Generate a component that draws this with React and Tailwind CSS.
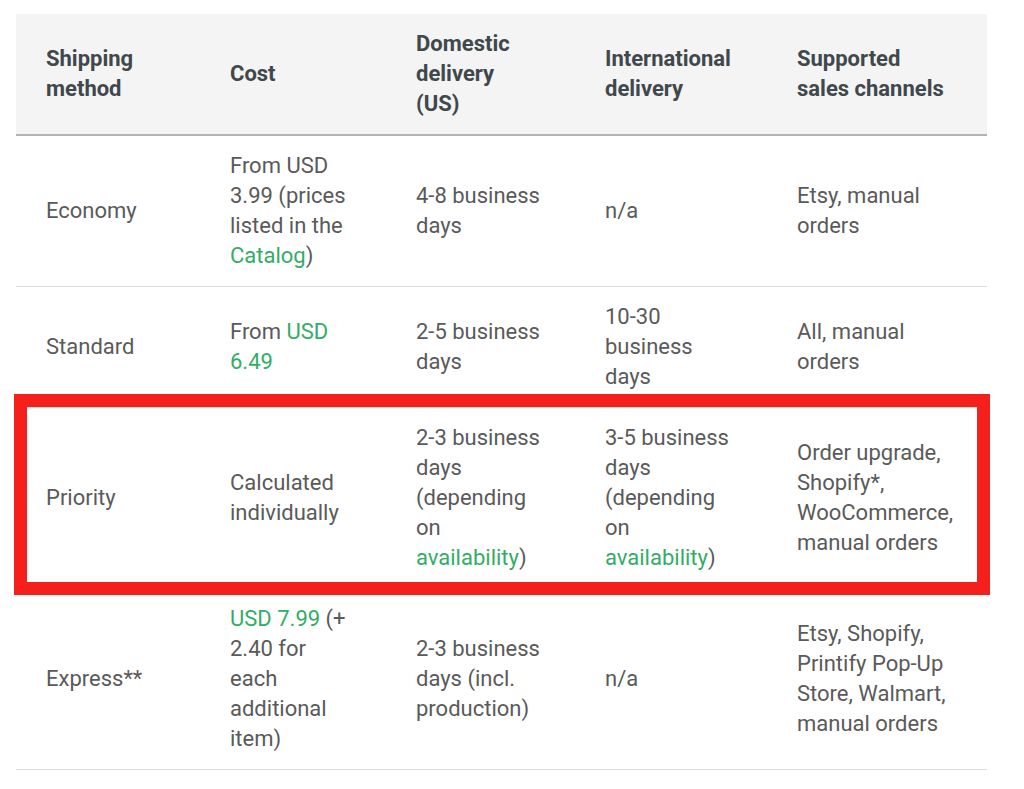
import React from 'react';

const Link = ({ children }) => <span className="text-[#33ad66]">{children}</span>;

const headers = [
  'Shipping method',
  'Cost',
  <>Domestic delivery<br />(US)</>,
  'International delivery',
  'Supported sales channels',
];

const rows = [
  {
    key: 'economy',
    cells: [
      'Economy',
      <>From USD 3.99 (prices listed in the <Link>Catalog</Link>)</>,
      '4-8 business days',
      'n/a',
      'Etsy, manual orders',
    ],
  },
  {
    key: 'standard',
    cells: [
      'Standard',
      <>From <Link>USD 6.49</Link></>,
      '2-5 business days',
      '10-30 business days',
      'All, manual orders',
    ],
  },
  {
    key: 'priority',
    cells: [
      'Priority',
      'Calculated individually',
      <>2-3 business days (depending on <Link>availability</Link>)</>,
      <>3-5 business days (depending on <Link>availability</Link>)</>,
      'Order upgrade, Shopify*, WooCommerce, manual orders',
    ],
  },
  {
    key: 'express',
    cells: [
      'Express**',
      <><Link>USD 7.99</Link> (+ 2.40 for each additional item)</>,
      '2-3 business days (incl. production)',
      'n/a',
      'Etsy, Shopify, Printify Pop-Up Store, Walmart, manual orders',
    ],
  },
];

// per-column right padding so lines wrap like the reference
const padR = ['pr-[20px]', 'pr-[34px]', 'pr-[33px]', 'pr-[30px]', 'pr-[30px]'];

export default function App() {
  return (
    <div className="min-h-[789px] w-[1024px] bg-white pt-[14px] pl-[16px] font-['Roboto',sans-serif]">
      <div className="relative w-[971px]">
        <table className="w-[971px] table-fixed border-collapse text-[22px] leading-[30px]">
          <colgroup>
            <col className="w-[184px]" />
            <col className="w-[186px]" />
            <col className="w-[189px]" />
            <col className="w-[192px]" />
            <col className="w-[220px]" />
          </colgroup>
          <thead>
            <tr className="bg-[#f4f4f4] border-b-2 border-[#b3b3b3]">
              {headers.map((h, i) => (
                <th
                  key={i}
                  className={`py-[15px] pl-[30px] ${padR[i]} text-left align-middle font-bold text-[#40484c]`}
                >
                  {h}
                </th>
              ))}
            </tr>
          </thead>
          <tbody>
            {rows.map(row => (
              <tr key={row.key} className="border-b border-[#dcdcdc]">
                {row.cells.map((c, i) => (
                  <td
                    key={i}
                    className={`py-[15px] pl-[30px] ${padR[i]} align-middle text-[#5a5a5a]`}
                  >
                    {c}
                  </td>
                ))}
              </tr>
            ))}
          </tbody>
        </table>

        {/* highlight box drawn over the Priority row */}
        <div className="pointer-events-none absolute left-[-2px] top-[380px] h-[201px] w-[976px] border-[13px] border-[#f5201c]" />
      </div>
    </div>
  );
}
